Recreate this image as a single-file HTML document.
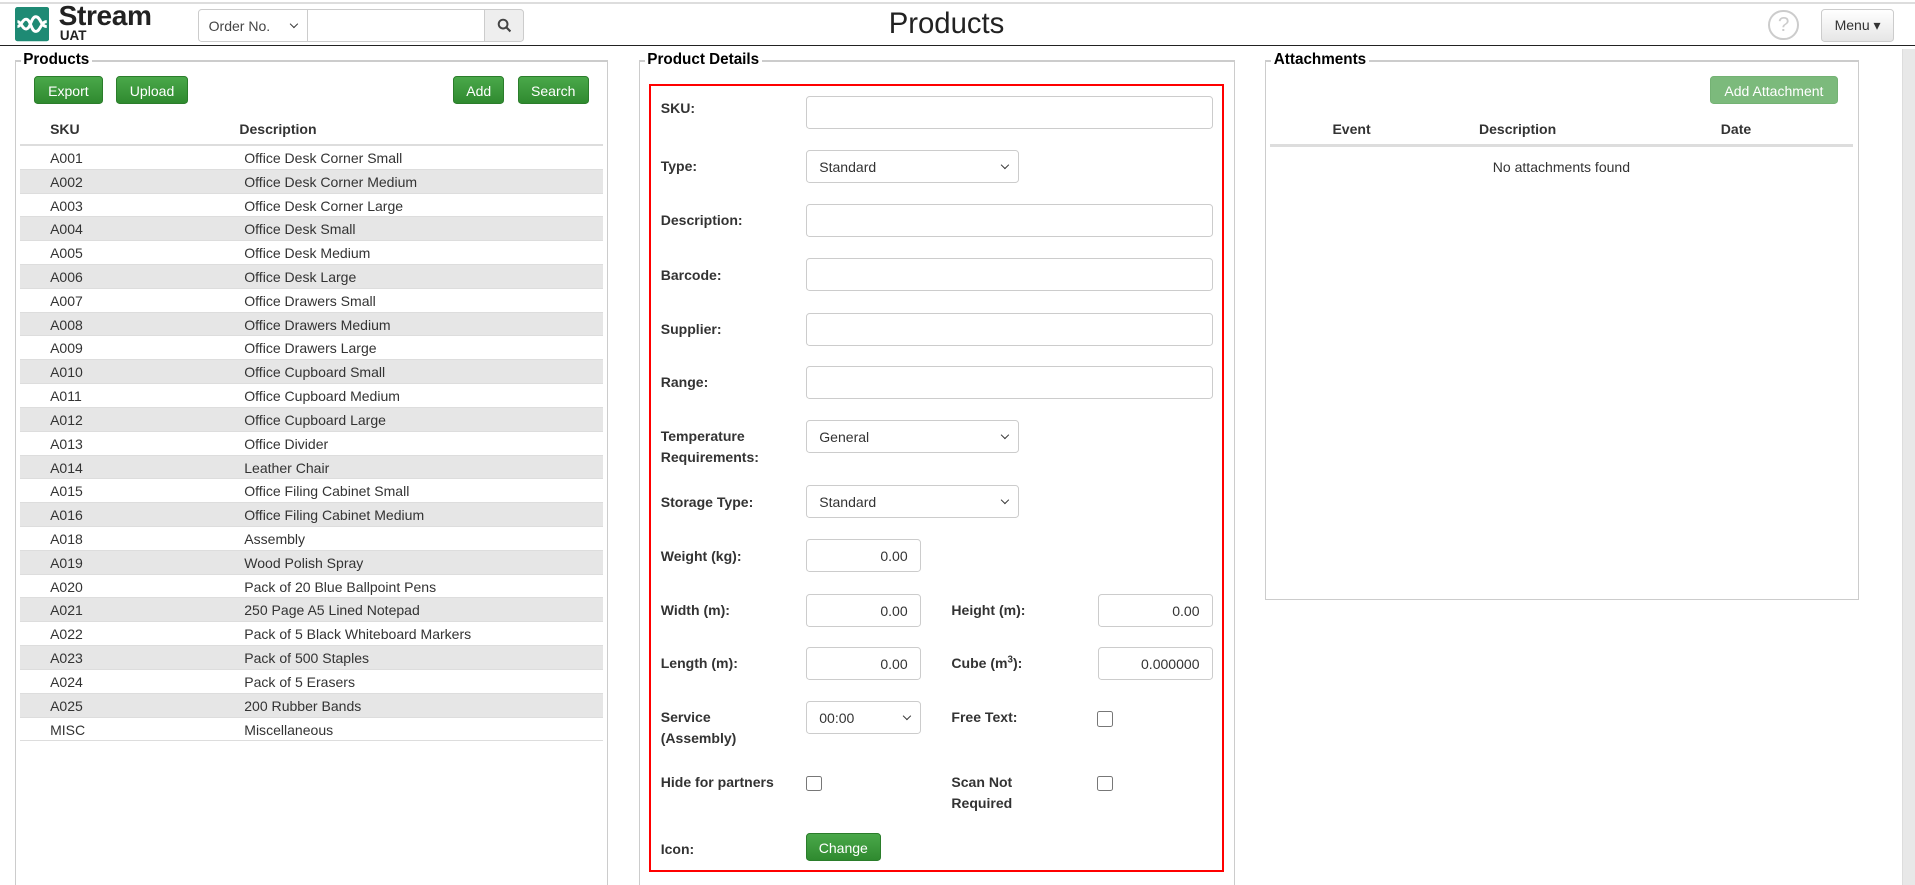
<!DOCTYPE html>
<html><head><meta charset="utf-8"><style>
*{box-sizing:border-box;margin:0;padding:0}
html,body{width:1915px;height:885px;overflow:hidden;background:#fff}
#r{zoom:1.22130;position:relative;width:1568px;height:725px;font-family:"Liberation Sans",Arial,sans-serif;font-size:11.5px;color:#333}
.a{position:absolute}
.btn{position:absolute;height:23px;border-radius:3px;color:#fff;font-size:11.5px;text-align:center;line-height:23px;background:linear-gradient(#4aa84a,#2f8a2f);border:1px solid #2b7d2b}
fieldset{position:absolute;border:1px solid #ccc;border-top:2px solid #ccc}
.lg{position:absolute;background:#fff;font-weight:bold;font-size:12.5px;color:#000;padding:0 2px}
.inp{position:absolute;height:27px;border:1px solid #ccc;border-radius:3px;background:#fff;font-size:11.5px;line-height:27px;padding:0 10px}
.sel:after{content:"";position:absolute;right:8px;top:9px;width:4px;height:4px;border-right:1.5px solid #333;border-bottom:1.5px solid #333;transform:rotate(45deg)}
.lb{position:absolute;left:541px;font-weight:bold;font-size:11.5px;color:#333;line-height:17px}
.cb{position:absolute;width:13px;height:13px;border:1px solid #777;border-radius:2px;background:#fff}
.row{position:absolute;left:16px;width:478px;height:19.5px;line-height:21px}
.row span{position:absolute}
</style></head><body><div id="r">
<div class="a" style="left:0;top:2px;width:1568px;height:1px;background:#ddd"></div>
<div class="a" style="left:0;top:37px;width:1568px;height:1px;background:#222"></div>
<svg class="a" style="left:12px;top:6px" width="28" height="28" viewBox="0 0 28 28"><rect width="28" height="28" rx="2" fill="#1e8a74"/><path d="M2 16 C5 16,6 10,9 10 C13 10,13 20,17 20 C21 20,21 12,26 12" stroke="#fff" stroke-width="2.4" fill="none"/><path d="M2 12 C5 12,6 18,9 18 C13 18,13 8,17 8 C21 8,21 16,26 16" stroke="#fff" stroke-width="2.4" fill="none"/></svg>
<div class="a" style="left:48px;top:0;font-size:23px;font-weight:bold;color:#222;letter-spacing:-0.3px">Stream</div>
<div class="a" style="left:49px;top:23px;font-size:11px;font-weight:bold;color:#222">UAT</div>
<div class="inp sel" style="left:162px;top:7px;width:90px;height:27px;border-radius:3px 0 0 3px;padding-left:8px;color:#444">Order No.</div>
<div class="inp" style="left:251px;top:7px;width:146px;border-radius:0"></div>
<div class="inp" style="left:396px;top:7px;width:33px;background:#eee;border-radius:0 3px 3px 0"><svg class="a" style="left:10px;top:7px" width="12" height="12" viewBox="0 0 12 12"><circle cx="5" cy="5" r="3.6" stroke="#444" stroke-width="1.6" fill="none"/><path d="M7.6 7.6 L11 11" stroke="#444" stroke-width="1.8"/></svg></div>
<div class="a" style="left:700px;top:6px;width:150px;text-align:center;font-size:24px;color:#222">Products</div>
<div class="a" style="left:1448px;top:8px;width:25px;height:25px;border:2px solid #ccc;border-radius:50%;text-align:center;color:#ccc;font-size:17px;line-height:21px">?</div>
<div class="a" style="left:1491px;top:7px;width:60px;height:27px;border:1px solid #ccc;border-radius:3px;background:linear-gradient(#fff,#e6e6e6);text-align:center;line-height:25px;font-size:11.5px;color:#333">Menu ▾</div>
<div class="a" style="left:1557px;top:40px;width:11px;height:685px;background:#e8e8e8;border-left:1px solid #ddd"></div>

<fieldset style="left:12px;top:49px;width:486px;height:700px"></fieldset>
<div class="lg" style="left:17px;top:42px">Products</div>
<div class="btn" style="left:28px;top:62px;width:56px">Export</div>
<div class="btn" style="left:95px;top:62px;width:59px">Upload</div>
<div class="btn" style="left:371px;top:62px;width:42px">Add</div>
<div class="btn" style="left:424px;top:62px;width:58px">Search</div>
<div class="a" style="left:41px;top:99px;font-weight:bold">SKU</div>
<div class="a" style="left:196px;top:99px;font-weight:bold">Description</div>
<div class="a" style="left:16px;top:118px;width:478px;height:2px;background:#ddd"></div>
<div id="rows"></div>

<fieldset style="left:523px;top:49px;width:488px;height:700px"></fieldset>
<div class="lg" style="left:528px;top:42px">Product Details</div>
<div class="a" style="left:531px;top:69px;width:471px;height:645px;border:2px solid #f00"></div>
<div class="lb" style="top:80px">SKU:</div><div class="inp" style="left:660px;top:79px;width:333px"></div>
<div class="lb" style="top:128px">Type:</div><div class="inp sel" style="left:660px;top:123px;width:174px">Standard</div>
<div class="lb" style="top:172px">Description:</div><div class="inp" style="left:660px;top:167px;width:333px"></div>
<div class="lb" style="top:217px">Barcode:</div><div class="inp" style="left:660px;top:211px;width:333px"></div>
<div class="lb" style="top:261px">Supplier:</div><div class="inp" style="left:660px;top:256px;width:333px"></div>
<div class="lb" style="top:305px">Range:</div><div class="inp" style="left:660px;top:300px;width:333px"></div>
<div class="lb" style="top:349px">Temperature<br>Requirements:</div><div class="inp sel" style="left:660px;top:344px;width:174px">General</div>
<div class="lb" style="top:403px">Storage Type:</div><div class="inp sel" style="left:660px;top:397px;width:174px">Standard</div>
<div class="lb" style="top:447px">Weight (kg):</div><div class="inp" style="left:660px;top:441px;width:94px;text-align:right">0.00</div>
<div class="lb" style="top:491px">Width (m):</div><div class="inp" style="left:660px;top:486px;width:94px;text-align:right">0.00</div>
<div class="lb" style="top:491px;left:779px">Height (m):</div><div class="inp" style="left:899px;top:486px;width:94px;text-align:right">0.00</div>
<div class="lb" style="top:535px">Length (m):</div><div class="inp" style="left:660px;top:530px;width:94px;text-align:right">0.00</div>
<div class="lb" style="top:535px;left:779px">Cube (m<sup style="font-size:8px;line-height:0">3</sup>):</div><div class="inp" style="left:899px;top:530px;width:94px;text-align:right">0.000000</div>
<div class="lb" style="top:579px">Service<br>(Assembly)</div><div class="inp sel" style="left:660px;top:574px;width:94px">00:00</div>
<div class="lb" style="top:579px;left:779px">Free Text:</div><div class="cb" style="left:898px;top:582px"></div>
<div class="lb" style="top:632px">Hide for partners</div><div class="cb" style="left:660px;top:635px"></div>
<div class="lb" style="top:632px;left:779px">Scan Not<br>Required</div><div class="cb" style="left:898px;top:635px"></div>
<div class="lb" style="top:687px">Icon:</div><div class="btn" style="left:660px;top:682px;width:61px">Change</div>

<fieldset style="left:1036px;top:49px;width:486px;height:442px"></fieldset>
<div class="lg" style="left:1041px;top:42px">Attachments</div>
<div class="btn" style="left:1400px;top:62px;width:105px;background:#7cba7c;border-color:#74b274">Add Attachment</div>
<div class="a" style="left:1091px;top:99px;font-weight:bold">Event</div>
<div class="a" style="left:1211px;top:99px;font-weight:bold">Description</div>
<div class="a" style="left:1409px;top:99px;font-weight:bold">Date</div>
<div class="a" style="left:1040px;top:118px;width:477px;height:2px;background:#ddd"></div>
<div class="a" style="left:1040px;top:130px;width:477px;text-align:center">No attachments found</div>
</div>
<script>
var d=[["A001","Office Desk Corner Small"],["A002","Office Desk Corner Medium"],["A003","Office Desk Corner Large"],["A004","Office Desk Small"],["A005","Office Desk Medium"],["A006","Office Desk Large"],["A007","Office Drawers Small"],["A008","Office Drawers Medium"],["A009","Office Drawers Large"],["A010","Office Cupboard Small"],["A011","Office Cupboard Medium"],["A012","Office Cupboard Large"],["A013","Office Divider"],["A014","Leather Chair"],["A015","Office Filing Cabinet Small"],["A016","Office Filing Cabinet Medium"],["A018","Assembly"],["A019","Wood Polish Spray"],["A020","Pack of 20 Blue Ballpoint Pens"],["A021","250 Page A5 Lined Notepad"],["A022","Pack of 5 Black Whiteboard Markers"],["A023","Pack of 500 Staples"],["A024","Pack of 5 Erasers"],["A025","200 Rubber Bands"],["MISC","Miscellaneous"]];
var h="";d.forEach(function(r,i){h+='<div class="row" style="top:'+(119.5+i*19.5)+'px;background:'+(i%2?'#e6e6e6':'#fff')+';border-bottom:1px solid #ddd"><span style="left:25px">'+r[0]+'</span><span style="left:184px">'+r[1]+'</span></div>';});
document.getElementById("rows").outerHTML=h;
</script>
</body></html>
